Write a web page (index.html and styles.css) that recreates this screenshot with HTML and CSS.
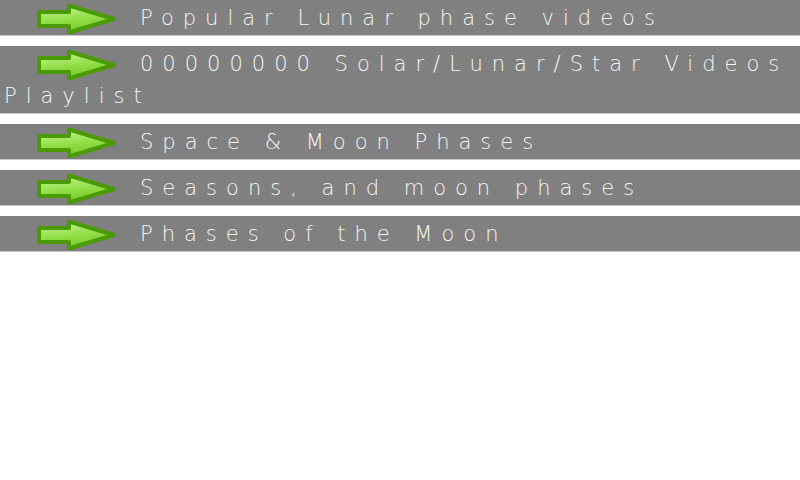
FILE: index.html
```html
<!DOCTYPE html>
<html lang="en">
  <head>
    <meta charset="UTF-8" />
    <meta name="viewport" content="width=device-width, initial-scale=1.0" />
    <link rel="stylesheet" href="styles.css">
  </head>
  <body>
    <svg class="defs" width="0" height="0">
      <defs>
        <linearGradient id="arrow-fill" x1="0" y1="0" x2="0.3" y2="1">
          <stop offset="0" stop-color="#c8f794" />
          <stop offset="0.6" stop-color="#92de48" />
          <stop offset="1" stop-color="#76cb2a" />
        </linearGradient>
        <symbol id="arrow" viewBox="0 0 112 30">
          <path d="M35 8 H65 V1.5 L110 15 L65 28.5 V22 H35 Z"
                fill="url(#arrow-fill)" stroke="#4a9a04" stroke-width="4" stroke-linejoin="round" />
        </symbol>
      </defs>
    </svg>

    <ul class="videos">
      <li class="video">
        <svg class="arrow"><use href="#arrow" /></svg><span class="title">Popular Lunar phase videos</span>
      </li>
      <li class="video">
        <svg class="arrow"><use href="#arrow" /></svg><span class="title">00000000 Solar/Lunar/Star Videos Playlist</span>
      </li>
      <li class="video">
        <svg class="arrow"><use href="#arrow" /></svg><span class="title">Space &amp; Moon Phases</span>
      </li>
      <li class="video">
        <svg class="arrow"><use href="#arrow" /></svg><span class="title">Seasons, and moon phases</span>
      </li>
      <li class="video">
        <svg class="arrow"><use href="#arrow" /></svg><span class="title">Phases of the Moon</span>
      </li>
    </ul>
  </body>
</html>
```

FILE: styles.css
```css
body {
  margin: 0;
  padding: 0;
  background-color: #fff;
  font-family: "DejaVu Sans", "Liberation Sans", sans-serif;
}

.defs {
  position: absolute;
  width: 0;
  height: 0;
}

.videos {
  list-style: none;
  margin: 0;
  padding: 0;
}

.video {
  background-color: #808080;
  border-bottom: 1px solid #c9c9c9;
  margin-bottom: 10px;
  padding: 2px 0 1px 4px;
  color: #f6f6f6;
  font-size: 21px;
  font-weight: 200;
  letter-spacing: 9px;
  line-height: 32px;
}

.arrow {
  width: 112px;
  height: 30px;
  vertical-align: middle;
  margin-right: 24px;
}
```
